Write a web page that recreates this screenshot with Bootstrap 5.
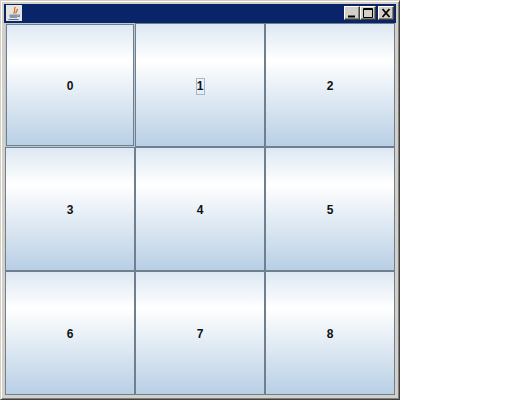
<!DOCTYPE html>
<html><head><meta charset="utf-8">
<link href="https://cdn.jsdelivr.net/npm/bootstrap@5.3.0/dist/css/bootstrap.min.css" rel="stylesheet">
<style>
html,body{margin:0;background:#fff;overflow:hidden}
.win-frame{width:400px;height:400px;background:#d4d0c8;border:1px solid;border-color:#d4d0c8 #404040 #404040 #d4d0c8;box-shadow:inset 1px 1px 0 #fff,inset -1px -1px 0 #808080;padding:3px}
.title-strip{height:19px;background:#0a246a;padding:0 2px 1px 2px}
.app-ico{width:16px;height:16px;background:#e6e4de;display:block}
.win-btn{width:16px;height:14px;background:#d4d0c8;border:1px solid;border-color:#fff #404040 #404040 #fff;box-shadow:inset -1px -1px 0 #808080;padding:0;display:block}
.win-btn svg{display:block;width:14px;height:12px}
.gap-close{margin-right:2px}
.btn-grid{display:grid;grid-template-columns:repeat(3,130px);grid-template-rows:repeat(3,124px);margin-left:1px;width:390px}
.cell-btn{border:1px solid #6f7f8e;border-radius:0;padding:2px 0 0;background:linear-gradient(180deg,#dde8f3 0%,#fff 30%,#b8cfe5 100%);display:flex;align-items:center;justify-content:center;font:700 12px/15px "Liberation Sans",sans-serif;color:#111}
.cell-hot{padding:0;border-color:#b9c8d6}
.inner-line{display:flex;align-items:center;justify-content:center;width:100%;height:100%;border:1px solid #6f7f8e;padding-top:2px}
.focus-box{border:1px solid #a3b8cc;width:9px;height:17px;display:flex;align-items:center;justify-content:center}
</style></head><body>
<div class="win-frame d-flex flex-column">
  <div class="title-strip d-flex align-items-center">
    <svg class="app-ico" viewBox="0 0 16 16"><rect width="16" height="16" fill="#e6e4de"/><path d="M9.5 2C7 4 10.5 5 7.5 8.5M12 4C9.5 6 11.5 6.5 9.5 8.5" stroke="#d9752e" stroke-width="1.3" fill="none"/><path d="M3.5 9.5h8v2c0 1-1 1.5-2 1.5h-4c-1 0-2-.5-2-1.5z" fill="#8296b4"/><path d="M11.5 10h2v1.5h-2" stroke="#6a7d9c" fill="none"/><path d="M2.5 14.5h10" stroke="#5a6e90"/></svg>
    <div class="d-flex ms-auto">
      <button class="win-btn" aria-label="min"><svg viewBox="0 0 14 12"><rect x="3" y="8.500" width="7" height="2" fill="#000"/></svg></button>
      <button class="win-btn gap-close" aria-label="max"><svg viewBox="0 0 14 12"><path d="M2.500 1.500h9v9h-9z M2 2.500h10" fill="none" stroke="#000"/></svg></button>
      <button class="win-btn" aria-label="close"><svg viewBox="0 0 14 12"><path d="M3.500 2l7 8M10.500 2l-7 8" stroke="#000" stroke-width="1.800"/></svg></button>
    </div>
  </div>
  <div class="btn-grid">
    <button class="cell-btn cell-hot"><span class="inner-line">0</span></button>
    <button class="cell-btn"><span class="focus-box">1</span></button>
    <button class="cell-btn">2</button>
    <button class="cell-btn">3</button>
    <button class="cell-btn">4</button>
    <button class="cell-btn">5</button>
    <button class="cell-btn">6</button>
    <button class="cell-btn">7</button>
    <button class="cell-btn">8</button>
  </div>
</div>
<script src="https://cdn.jsdelivr.net/npm/bootstrap@5.3.0/dist/js/bootstrap.bundle.min.js"></script>
</body></html>
